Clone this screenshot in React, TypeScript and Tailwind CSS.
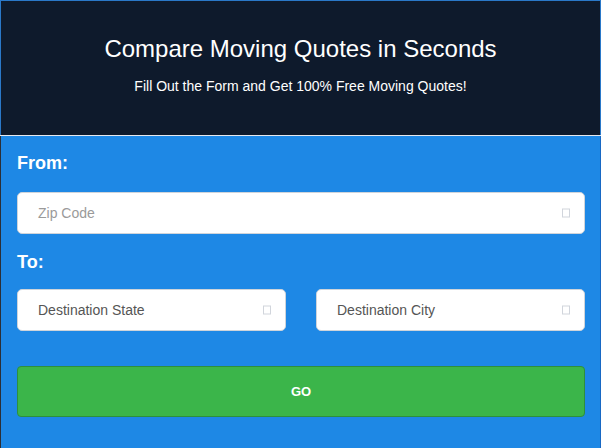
import React from "react";

// Missing icon-font glyph that the form shows at the end of every field
function FieldGlyph() {
  return <span className="absolute right-[14px] top-1/2 -translate-y-1/2 h-[9px] w-[8px] border border-gray-300" />;
}

function Field({ placeholder, muted }: { placeholder: string; muted?: boolean }) {
  return (
    <div className="relative flex h-[42px] items-center rounded-[5px] border border-[#cfd4da] bg-white pl-5 pr-8">
      <span className={muted ? "text-[14px] text-[#9a9a9a]" : "text-[14px] text-[#555]"}>{placeholder}</span>
      <FieldGlyph />
    </div>
  );
}

export default function App() {
  return (
    <div className="h-[448px] w-[601px] overflow-hidden font-['Liberation_Sans',Arial,sans-serif]">
      <header className="flex h-[135px] flex-col items-center border-x border-t border-[#2a78c8] bg-[#0e1a2c] pt-[34px] text-white">
        <h1 className="text-[24px] leading-[28px]">Compare Moving Quotes in Seconds</h1>
        <p className="mt-[15px] text-[14px] leading-[16px]">Fill Out the Form and Get 100% Free Moving Quotes!</p>
      </header>
      <div className="h-px bg-[#e6e9ee]" />
      <form className="flex h-[312px] flex-col border-l border-l-[#2b2f36] border-r border-r-[#1768c4] bg-[#1e88e5] pl-4 pr-[15px] pt-[17px]">
        <label className="text-[18px] font-bold leading-[21px] text-white">From:</label>
        <div className="mt-[18px]">
          <Field placeholder="Zip Code" muted />
        </div>
        <label className="mt-[18px] text-[18px] font-bold leading-[21px] text-white">To:</label>
        <div className="mt-[16px] grid grid-cols-2 gap-[30px]">
          <Field placeholder="Destination State" />
          <Field placeholder="Destination City" />
        </div>
        <button
          type="button"
          className="mt-[35px] h-[51px] rounded-[4px] border border-[#2e8f3c] bg-[#3bb54a] text-[13px] font-bold text-white"
        >
          GO
        </button>
      </form>
    </div>
  );
}
